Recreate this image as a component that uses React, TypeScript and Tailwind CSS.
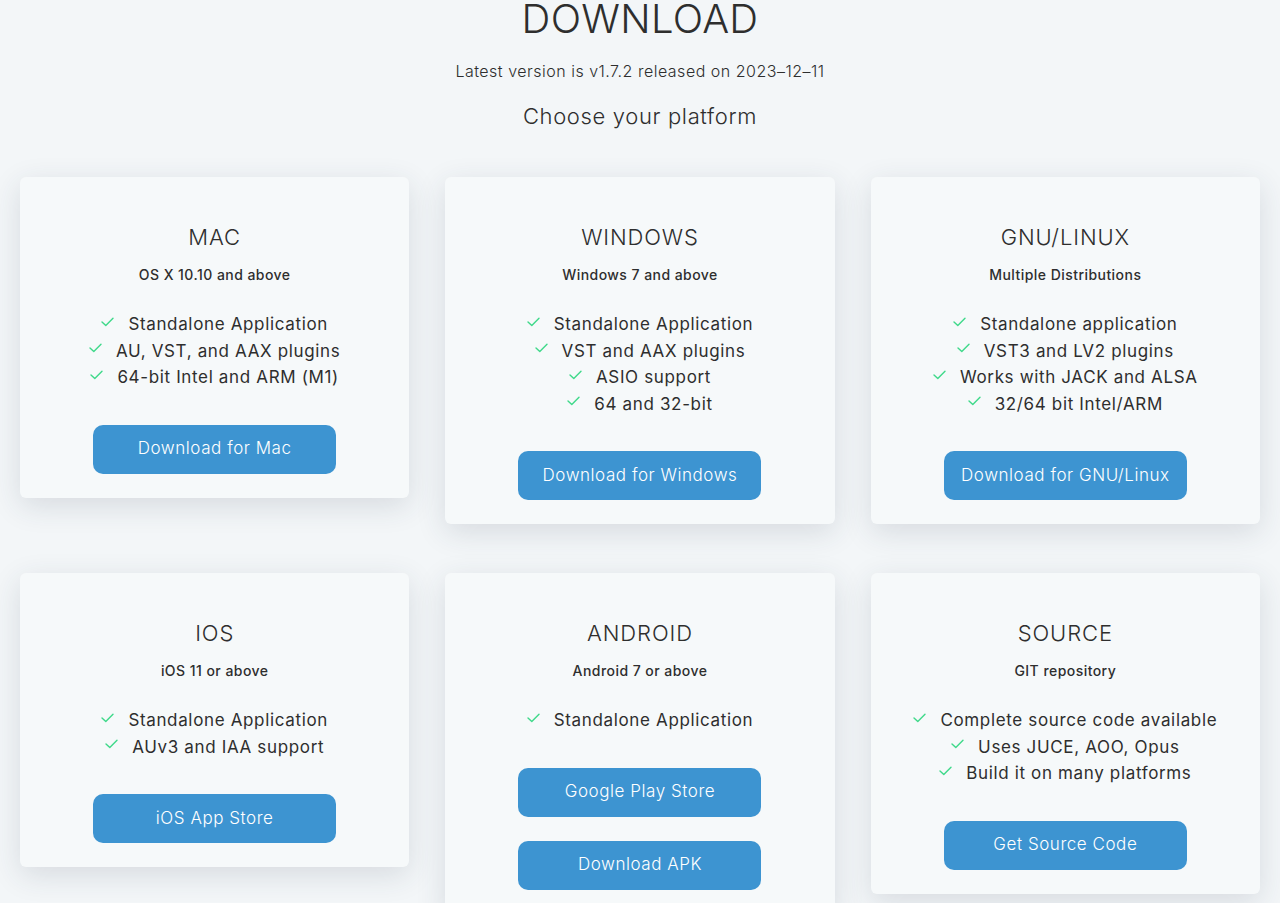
import React from "react";

type Card = {
  title: string;
  subtitle: string;
  features: string[];
  buttons: string[];
};

const cards: Card[] = [
  {
    title: "MAC",
    subtitle: "OS X 10.10 and above",
    features: ["Standalone Application", "AU, VST, and AAX plugins", "64-bit Intel and ARM (M1)"],
    buttons: ["Download for Mac"],
  },
  {
    title: "WINDOWS",
    subtitle: "Windows 7 and above",
    features: ["Standalone Application", "VST and AAX plugins", "ASIO support", "64 and 32-bit"],
    buttons: ["Download for Windows"],
  },
  {
    title: "GNU/LINUX",
    subtitle: "Multiple Distributions",
    features: ["Standalone application", "VST3 and LV2 plugins", "Works with JACK and ALSA", "32/64 bit Intel/ARM"],
    buttons: ["Download for GNU/Linux"],
  },
  {
    title: "IOS",
    subtitle: "iOS 11 or above",
    features: ["Standalone Application", "AUv3 and IAA support"],
    buttons: ["iOS App Store"],
  },
  {
    title: "ANDROID",
    subtitle: "Android 7 or above",
    features: ["Standalone Application"],
    buttons: ["Google Play Store", "Download APK"],
  },
  {
    title: "SOURCE",
    subtitle: "GIT repository",
    features: ["Complete source code available", "Uses JUCE, AOO, Opus", "Build it on many platforms"],
    buttons: ["Get Source Code"],
  },
];

function Check() {
  return (
    <svg width="13" height="10" viewBox="0 0 13 10" className="mb-[5px] shrink-0" fill="none">
      <polyline points="1,5 4.8,8.6 12,1.2" stroke="#3fd98a" strokeWidth="1.4" strokeLinecap="round" strokeLinejoin="round" />
    </svg>
  );
}

function PlatformCard({ card }: { card: Card }) {
  return (
    <div className="bg-[#f6f9fa] rounded-[6px] shadow-[0_8px_30px_rgba(40,60,80,0.14)] pt-[45px] pb-[24px] flex flex-col items-center text-[#2e2e2e]">
      <h2 className="text-[22px] leading-[30px] font-light tracking-[0.9px]">{card.title}</h2>
      <p className="mt-[13px] text-[14px] leading-[20px] font-medium tracking-[0.45px]">{card.subtitle}</p>
      <ul className="mt-[26px] flex flex-col items-center">
        {card.features.map((f) => (
          <li key={f} className="flex items-center gap-[14px] text-[17px] leading-[26.5px] tracking-[0.65px]">
            <Check />
            <span>{f}</span>
          </li>
        ))}
      </ul>
      <div className="mt-[34px] flex flex-col items-center gap-[24px]">
        {card.buttons.map((b) => (
          <button
            key={b}
            className="w-[243px] h-[49px] rounded-[10px] bg-[#3d94d1] text-white text-[17px] font-light tracking-[0.55px]"
          >
            {b}
          </button>
        ))}
      </div>
    </div>
  );
}

export default function App() {
  return (
    <div
      className="min-h-screen bg-[#f3f6f8] text-[#2e2e2e]"
      style={{ fontFamily: "Inter, 'Noto Sans', sans-serif" }}
    >
      <header className="flex flex-col items-center">
        <h1 className="text-[40px] leading-[38px] font-light tracking-[0.3px]">DOWNLOAD</h1>
        <p className="mt-[21px] text-[16px] leading-[24px] font-light tracking-[0.5px]">Latest version is v1.7.2 released on 2023–12–11</p>
        <p className="mt-[18px] text-[22px] leading-[30px] font-light tracking-[0.65px]">Choose your platform</p>
      </header>
      <main className="max-w-[1240px] mx-auto mt-[46px] grid grid-cols-3 gap-x-[36px] gap-y-[49px] items-start pb-10">
        {cards.map((c) => (
          <PlatformCard key={c.title} card={c} />
        ))}
      </main>
    </div>
  );
}
